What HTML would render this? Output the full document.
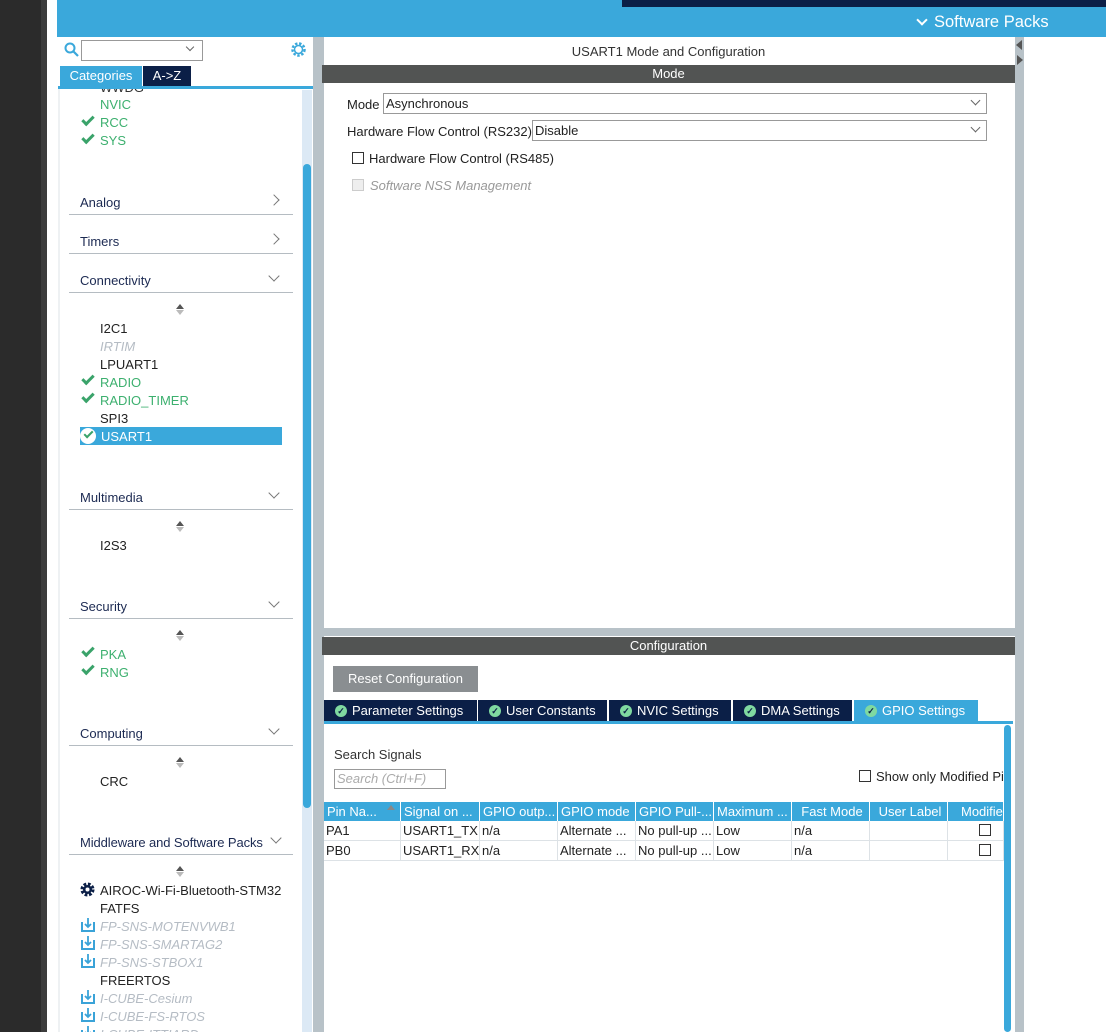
<!DOCTYPE html>
<html><head><meta charset="utf-8"><style>
*{margin:0;padding:0;box-sizing:border-box}
html,body{overflow:hidden}
body{width:1106px;height:1032px;position:relative;background:#fff;font-family:"Liberation Sans",sans-serif;font-size:13px;color:#222}
.a{position:absolute}
.t{position:absolute;white-space:nowrap}
.g{color:#3db06f}
.cat{position:absolute;left:80px;color:#1c2a52;font-size:13px}
.ln{position:absolute;left:69px;width:224px;height:1px;background:#b5bcc2}
.chev{position:absolute;left:270px;width:8px;height:8px;border-right:1.3px solid #777;border-bottom:1.3px solid #777}
.ck{position:absolute;left:82px;width:12px;height:7px;border-left:3px solid #3aa36a;border-bottom:3px solid #3aa36a;transform:rotate(-45deg)}
.sort{position:absolute;left:176px;width:0;height:0;border-left:4px solid transparent;border-right:4px solid transparent}
.gi{color:#b5bcc4;font-style:italic}
.tab{position:absolute;top:700px;height:22px;background:#0b1f47;color:#fff;font-size:13px;line-height:22px;padding-left:28px}
.tab:before{content:"✓";position:absolute;left:11px;top:5px;width:12px;height:12px;border-radius:50%;background:#7fd9a0;color:#0b1f47;font-size:9px;line-height:12px;text-align:center;font-weight:bold}
.th{position:absolute;top:802px;height:19px;background:#3aa8db;color:#fff;line-height:19px;font-size:13px;padding-left:3px;border-right:1px solid #fff;overflow:hidden;white-space:nowrap}
.td{position:absolute;height:20px;line-height:20px;font-size:13px;padding-left:2px;border-right:1px solid #dde2e6;border-bottom:1px solid #dde2e6;white-space:nowrap;overflow:hidden}
.cb{position:absolute;width:12px;height:12px;border:1px solid #333;background:#fff}
</style></head><body>
<div class="a" style="left:0;top:0;width:41px;height:1032px;background:#2b2b2b"></div>
<div class="a" style="left:41px;top:0;width:6px;height:1032px;background:#3c3c3c"></div>
<div class="a" style="left:57px;top:0;width:1049px;height:37px;background:#3aa8db"></div>
<div class="a" style="left:622px;top:0;width:484px;height:7px;background:#0b1f47"></div>
<div class="t" style="left:915px;top:13px;color:#fff;font-size:16.5px"><span style="display:inline-block;width:8px;height:8px;border-right:2px solid #fff;border-bottom:2px solid #fff;transform:rotate(45deg);margin:0 8px 3px 3px"></span>Software Packs</div>

<!-- left panel -->
<svg class="a" style="left:64px;top:42px" width="16" height="16"><circle cx="6" cy="6" r="4.5" fill="none" stroke="#3aa8db" stroke-width="2"/><line x1="9" y1="9" x2="14" y2="14" stroke="#3aa8db" stroke-width="2.2"/></svg>
<div class="a" style="left:81px;top:40px;width:122px;height:21px;border:1px solid #999"></div>
<div class="a" style="left:187px;top:44px;width:6px;height:6px;border-right:1px solid #666;border-bottom:1px solid #666;transform:rotate(45deg)"></div>
<svg class="a" style="left:290px;top:41px" width="17" height="17"><circle cx="8.5" cy="8.5" r="6" fill="none" stroke="#3aa8db" stroke-width="2.5" stroke-dasharray="2.4 1.7"/><circle cx="8.5" cy="8.5" r="4" fill="none" stroke="#3aa8db" stroke-width="1.5"/></svg>
<div class="a" style="left:60px;top:66px;width:82px;height:20px;background:#3aa8db;color:#fff;line-height:20px;text-align:center">Categories</div>
<div class="a" style="left:143px;top:66px;width:48px;height:20px;background:#0b1f47;color:#fff;line-height:20px;text-align:center">A-&gt;Z</div>
<div class="a" style="left:302px;top:90px;width:10px;height:942px;background:#dce9f5"></div>
<div class="a" style="left:303px;top:164px;width:8px;height:644px;background:#3aa8db;border-radius:4px"></div>
<div class="a" style="left:313px;top:37px;width:9px;height:995px;background:#b8c2c8"></div>
<div class="a" style="left:58px;top:89px;width:2px;height:943px;background:#eef1f3"></div>

<div class="a" style="left:100px;top:89px;width:60px;height:6px;overflow:hidden"><div class="t" style="left:0;top:-9px;color:#333">WWDG</div></div>
<div class="a" style="left:58px;top:86px;width:255px;height:3px;background:#3aa8db"></div>
<div class="t g" style="left:100px;top:97px">NVIC</div>
<div class="ck" style="top:116px"></div><div class="t g" style="left:100px;top:115px">RCC</div>
<div class="ck" style="top:134px"></div><div class="t g" style="left:100px;top:133px">SYS</div>

<div class="cat" style="top:195px">Analog</div><div class="chev" style="top:196px;transform:rotate(-45deg)"></div><div class="ln" style="top:214px"></div>
<div class="cat" style="top:234px">Timers</div><div class="chev" style="top:235px;transform:rotate(-45deg)"></div><div class="ln" style="top:253px"></div>
<div class="cat" style="top:273px">Connectivity</div><div class="chev" style="top:272px;transform:rotate(45deg)"></div><div class="ln" style="top:292px"></div>
<div class="sort" style="top:304px;border-bottom:5px solid #555"></div><div class="sort" style="top:310px;border-top:5px solid #bbb"></div>
<div class="t" style="left:100px;top:321px">I2C1</div>
<div class="t gi" style="left:100px;top:339px">IRTIM</div>
<div class="t" style="left:100px;top:357px">LPUART1</div>
<div class="ck" style="top:375px"></div><div class="t g" style="left:100px;top:375px">RADIO</div>
<div class="ck" style="top:393px"></div><div class="t g" style="left:100px;top:393px">RADIO_TIMER</div>
<div class="t" style="left:100px;top:411px">SPI3</div>
<div class="a" style="left:80px;top:427px;width:202px;height:18px;background:#3aa8db"></div>
<div class="a" style="left:80px;top:428px;width:16px;height:16px;border-radius:50%;background:#fff"></div>
<div class="ck" style="top:431px;left:84px;width:9px;height:5px;border-width:2.5px"></div>
<div class="t" style="left:101px;top:429px;color:#fff">USART1</div>

<div class="cat" style="top:490px">Multimedia</div><div class="chev" style="top:489px;transform:rotate(45deg)"></div><div class="ln" style="top:509px"></div>
<div class="sort" style="top:521px;border-bottom:5px solid #555"></div><div class="sort" style="top:527px;border-top:5px solid #bbb"></div>
<div class="t" style="left:100px;top:538px">I2S3</div>

<div class="cat" style="top:599px">Security</div><div class="chev" style="top:598px;transform:rotate(45deg)"></div><div class="ln" style="top:618px"></div>
<div class="sort" style="top:630px;border-bottom:5px solid #555"></div><div class="sort" style="top:636px;border-top:5px solid #bbb"></div>
<div class="ck" style="top:647px"></div><div class="t g" style="left:100px;top:647px">PKA</div>
<div class="ck" style="top:665px"></div><div class="t g" style="left:100px;top:665px">RNG</div>

<div class="cat" style="top:726px">Computing</div><div class="chev" style="top:725px;transform:rotate(45deg)"></div><div class="ln" style="top:745px"></div>
<div class="sort" style="top:757px;border-bottom:5px solid #555"></div><div class="sort" style="top:763px;border-top:5px solid #bbb"></div>
<div class="t" style="left:100px;top:774px">CRC</div>

<div class="cat" style="top:835px;letter-spacing:-0.1px">Middleware and Software Packs</div><div class="chev" style="top:834px;left:272px;transform:rotate(45deg)"></div><div class="ln" style="top:854px"></div>
<div class="sort" style="top:866px;border-bottom:5px solid #555"></div><div class="sort" style="top:872px;border-top:5px solid #bbb"></div>
<svg class="a" style="left:80px;top:882px" width="15" height="15"><circle cx="7.5" cy="7.5" r="5.3" fill="none" stroke="#0b1f47" stroke-width="3.5" stroke-dasharray="2.6 1.6"/><circle cx="7.5" cy="7.5" r="4.5" fill="#0b1f47"/><circle cx="7.5" cy="7.5" r="2" fill="#fff"/></svg>
<div class="t" style="left:100px;top:883px">AIROC-Wi-Fi-Bluetooth-STM32</div>
<div class="t" style="left:100px;top:901px">FATFS</div>
<svg class="a" style="left:81px;top:918px" width="14" height="72"><defs><g id="d"><path d="M1 4v9h12V4" fill="none" stroke="#3aa3d8" stroke-width="2"/><path d="M7 0v9M4 6l3 3 3-3" fill="none" stroke="#3aa3d8" stroke-width="1.8"/></g></defs><use href="#d"/><use href="#d" y="18"/><use href="#d" y="36"/></svg>
<div class="t gi" style="left:100px;top:919px">FP-SNS-MOTENVWB1</div>
<div class="t gi" style="left:100px;top:937px">FP-SNS-SMARTAG2</div>
<div class="t gi" style="left:100px;top:955px">FP-SNS-STBOX1</div>
<div class="t" style="left:100px;top:973px">FREERTOS</div>
<svg class="a" style="left:81px;top:990px" width="14" height="50"><use href="#d"/><use href="#d" y="18"/><use href="#d" y="36"/></svg>
<div class="t gi" style="left:100px;top:991px">I-CUBE-Cesium</div>
<div class="t gi" style="left:100px;top:1009px">I-CUBE-FS-RTOS</div>
<div class="t gi" style="left:100px;top:1027px">I-CUBE-ITTIARD</div>

<!-- main top -->
<div class="a" style="left:322px;top:37px;width:2px;height:995px;background:#b8c2c8"></div>
<div class="t" style="left:322px;top:44px;width:693px;text-align:center;color:#333">USART1 Mode and Configuration</div>
<div class="a" style="left:322px;top:65px;width:693px;height:18px;background:#525453;color:#fff;text-align:center;line-height:18px">Mode</div>
<div class="t" style="left:347px;top:97px">Mode</div>
<div class="a" style="left:383px;top:93px;width:604px;height:21px;border:1px solid #999;padding-left:2px;line-height:19px">Asynchronous</div>
<div class="a" style="left:972px;top:97px;width:7px;height:7px;border-right:1px solid #666;border-bottom:1px solid #666;transform:rotate(45deg)"></div>
<div class="t" style="left:347px;top:124px">Hardware Flow Control (RS232)</div>
<div class="a" style="left:532px;top:120px;width:455px;height:21px;border:1px solid #999;padding-left:2px;line-height:19px">Disable</div>
<div class="a" style="left:972px;top:124px;width:7px;height:7px;border-right:1px solid #666;border-bottom:1px solid #666;transform:rotate(45deg)"></div>
<div class="cb" style="left:352px;top:152px"></div><div class="t" style="left:369px;top:151px">Hardware Flow Control (RS485)</div>
<div class="cb" style="left:352px;top:179px;border-color:#ccc;background:#eee"></div><div class="t gi" style="left:370px;top:178px;color:#999">Software NSS Management</div>

<div class="a" style="left:322px;top:628px;width:693px;height:8px;background:#b8c2c8"></div>
<div class="a" style="left:1015px;top:37px;width:9px;height:995px;background:#b8c2c8"></div>
<div class="a" style="left:1016px;top:40px;width:0;height:0;border-top:5px solid transparent;border-bottom:5px solid transparent;border-right:6px solid #555"></div>
<div class="a" style="left:1017px;top:55px;width:0;height:0;border-top:5px solid transparent;border-bottom:5px solid transparent;border-left:6px solid #555"></div>

<!-- config -->
<div class="a" style="left:322px;top:637px;width:693px;height:18px;background:#525453;color:#fff;text-align:center;line-height:18px">Configuration</div>
<div class="a" style="left:333px;top:666px;width:145px;height:26px;background:#8a8e91;color:#fff;line-height:26px;text-align:center">Reset Configuration</div>
<div class="tab" style="left:324px;width:153px">Parameter Settings</div>
<div class="tab" style="left:478px;width:129px">User Constants</div>
<div class="tab" style="left:609px;width:122px">NVIC Settings</div>
<div class="tab" style="left:733px;width:119px">DMA Settings</div>
<div class="tab" style="left:854px;width:124px;background:#3aa8db">GPIO Settings</div>
<div class="a" style="left:324px;top:721px;width:689px;height:3px;background:#3aa8db"></div>
<div class="a" style="left:1004px;top:725px;width:7px;height:307px;background:#3aa8db;border-radius:4px"></div>
<div class="t" style="left:334px;top:747px;color:#333">Search Signals</div>
<div class="a" style="left:334px;top:769px;width:112px;height:20px;border:1px solid #999;color:#aaa;font-style:italic;padding-left:2px;line-height:18px">Search (Ctrl+F)</div>
<div class="cb" style="left:859px;top:770px"></div><div class="t" style="left:876px;top:769px;width:128px;overflow:hidden">Show only Modified Pins</div>

<div class="th" style="left:324px;width:77px">Pin Na...</div>
<div class="a" style="left:387px;top:805px;width:0;height:0;border-left:4px solid transparent;border-right:4px solid transparent;border-bottom:5px solid #888"></div>
<div class="th" style="left:401px;width:79px">Signal on ...</div>
<div class="th" style="left:480px;width:78px">GPIO outp...</div>
<div class="th" style="left:558px;width:78px">GPIO mode</div>
<div class="th" style="left:636px;width:78px">GPIO Pull-...</div>
<div class="th" style="left:714px;width:78px">Maximum ...</div>
<div class="th" style="left:792px;width:78px;text-align:center">Fast Mode</div>
<div class="th" style="left:870px;width:78px;text-align:center">User Label</div>
<div class="th" style="left:948px;width:56px;padding-left:13px">Modified</div>

<div class="td" style="left:324px;top:821px;width:77px">PA1</div>
<div class="td" style="left:401px;top:821px;width:79px">USART1_TX</div>
<div class="td" style="left:480px;top:821px;width:78px">n/a</div>
<div class="td" style="left:558px;top:821px;width:78px">Alternate ...</div>
<div class="td" style="left:636px;top:821px;width:78px">No pull-up ...</div>
<div class="td" style="left:714px;top:821px;width:78px">Low</div>
<div class="td" style="left:792px;top:821px;width:78px">n/a</div>
<div class="td" style="left:870px;top:821px;width:78px"></div>
<div class="td" style="left:948px;top:821px;width:56px"></div>
<div class="cb" style="left:979px;top:824px"></div>
<div class="td" style="left:324px;top:841px;width:77px">PB0</div>
<div class="td" style="left:401px;top:841px;width:79px">USART1_RX</div>
<div class="td" style="left:480px;top:841px;width:78px">n/a</div>
<div class="td" style="left:558px;top:841px;width:78px">Alternate ...</div>
<div class="td" style="left:636px;top:841px;width:78px">No pull-up ...</div>
<div class="td" style="left:714px;top:841px;width:78px">Low</div>
<div class="td" style="left:792px;top:841px;width:78px">n/a</div>
<div class="td" style="left:870px;top:841px;width:78px"></div>
<div class="td" style="left:948px;top:841px;width:56px"></div>
<div class="cb" style="left:979px;top:844px"></div>
</body></html>
